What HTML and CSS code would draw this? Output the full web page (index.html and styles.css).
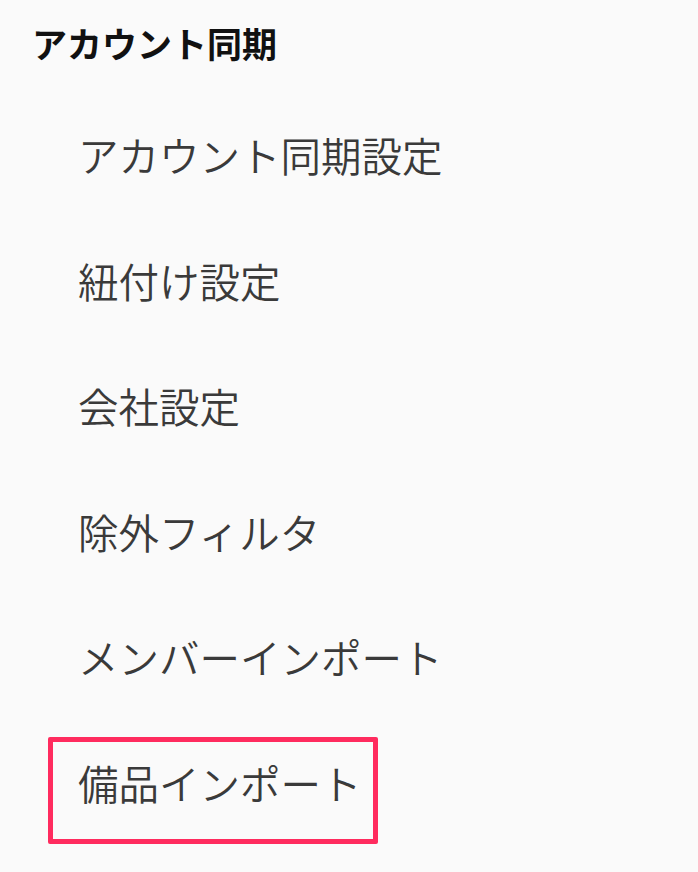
FILE: index.html
```html
<!DOCTYPE html>
<html lang="ja">
<head>
<meta charset="utf-8">
<link rel="stylesheet" href="styles.css">
</head>
<body>
<div class="menu">
  <div class="menu-title">アカウント同期</div>
  <ul class="menu-list">
    <li class="menu-item">アカウント同期設定</li>
    <li class="menu-item">紐付け設定</li>
    <li class="menu-item">会社設定</li>
    <li class="menu-item">除外フィルタ</li>
    <li class="menu-item">メンバーインポート</li>
    <li class="menu-item is-highlighted">備品インポート</li>
  </ul>
</div>
</body>
</html>
```
FILE: styles.css
```css
html, body {
  margin: 0;
  padding: 0;
  background: #fafafa;
}
body {
  width: 698px;
  height: 872px;
  overflow: hidden;
  font-family: "Noto Sans CJK JP", "Noto Sans", sans-serif;
  color: #333333;
}
.menu-title {
  padding-left: 32px;
  font-size: 35px;
  font-weight: 700;
  line-height: 86px;
  color: #111111;
}
.menu-list {
  list-style: none;
  margin: 6px 0 0 0;
  padding: 0;
}
.menu-item {
  position: relative;
  height: 125.6px;
  line-height: 125.6px;
  padding-left: 78px;
  font-size: 40.5px;
  font-weight: 350;
  color: #3a3a3a;
}
.is-highlighted::after {
  content: "";
  position: absolute;
  left: 48px;
  top: 17px;
  width: 330px;
  height: 107px;
  box-sizing: border-box;
  border: 5px solid #ff2b5e;
  border-radius: 2px;
}
```
